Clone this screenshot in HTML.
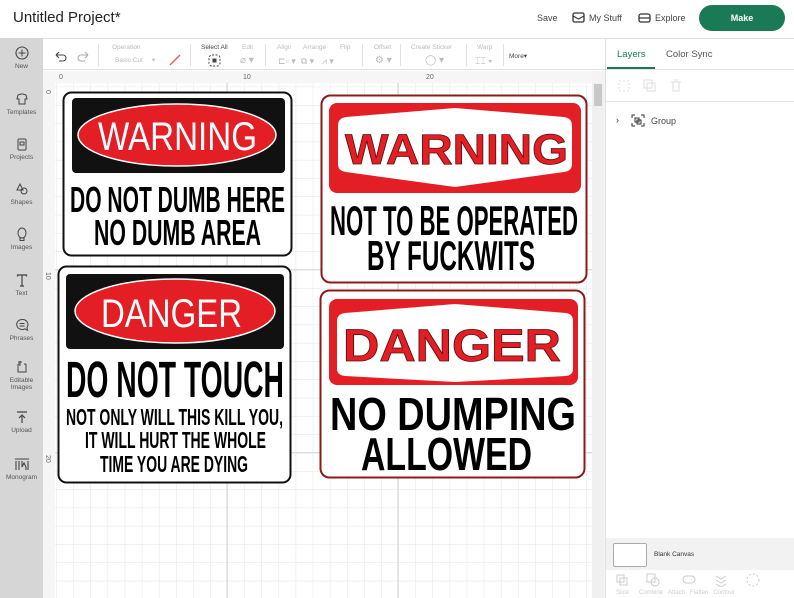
<!DOCTYPE html>
<html><head><meta charset="utf-8"><style>
*{margin:0;padding:0;box-sizing:border-box}
body{width:794px;height:598px;overflow:hidden;background:#fff;font-family:"Liberation Sans",sans-serif;position:relative;color:#333}
.abs{position:absolute}
.side{left:0;top:38px;width:43px;height:560px;background:#d6d6d6}
.si{position:absolute;left:0;width:43px;text-align:center;font-size:6.5px;color:#555}
.si svg{display:block;margin:0 auto 3px}
.tb{font-size:6.5px;color:#bbb;position:absolute}
</style></head><body>
<div class="abs" style="left:13px;top:9px;font-size:15px;color:#222">Untitled Project*</div>
<div class="abs" style="left:537px;top:13px;font-size:9px;color:#444">Save</div>
<svg class="abs" style="left:572px;top:12px" width="13" height="11"><rect x="1" y="1" width="11" height="9" rx="1.5" fill="none" stroke="#333" stroke-width="1.3"/><path d="M1 4l5.5 3 5.5-3" fill="none" stroke="#333" stroke-width="1.2"/></svg>
<div class="abs" style="left:589px;top:13px;font-size:9px;color:#444">My Stuff</div>
<svg class="abs" style="left:638px;top:13px" width="13" height="10"><rect x="1" y="1" width="11" height="8" rx="2" fill="none" stroke="#333" stroke-width="1.3"/><path d="M1 5h11" stroke="#333" stroke-width="1.2"/></svg>
<div class="abs" style="left:655px;top:13px;font-size:9px;color:#444">Explore</div>
<div class="abs" style="left:699px;top:5px;width:86px;height:26px;border-radius:13px;background:#1b7a56;color:#fff;font-size:9px;font-weight:bold;text-align:center;line-height:26px">Make</div>
<div class="abs" style="left:0;top:38px;width:794px;height:1px;background:#e2e2e2"></div>

<div class="abs side">
<div class="si" style="top:8px"><svg width="14" height="14"><circle cx="7" cy="7" r="6" fill="none" stroke="#444" stroke-width="1.1"/><path d="M7 3.5v7M3.5 7h7" stroke="#444"/></svg>New</div>
<div class="si" style="top:54px"><svg width="14" height="14"><path d="M3 3l3-1h2l3 1 1 4h-2v5H4V7H2z" fill="none" stroke="#444"/></svg>Templates</div>
<div class="si" style="top:99px"><svg width="14" height="14"><rect x="3" y="2" width="8" height="11" rx="1" fill="none" stroke="#444"/><rect x="5" y="5" width="4" height="3" fill="none" stroke="#444"/></svg>Projects</div>
<div class="si" style="top:144px"><svg width="14" height="14"><path d="M2 8l3-6 3 6z" fill="none" stroke="#444"/><circle cx="9" cy="9" r="3" fill="none" stroke="#444"/></svg>Shapes</div>
<div class="si" style="top:189px"><svg width="14" height="14"><ellipse cx="7" cy="6" rx="4" ry="5" fill="none" stroke="#444"/><rect x="5" y="11" width="4" height="2.5" fill="none" stroke="#444"/></svg>Images</div>
<div class="si" style="top:235px"><svg width="14" height="14"><path d="M2.5 3.5V2h9v1.5M7 2v11M5 13h4" fill="none" stroke="#444" stroke-width="1.2"/></svg>Text</div>
<div class="si" style="top:280px"><svg width="14" height="14"><path d="M7 1.5a5.5 5 0 1 0 3 9.3l2.5 1.5-.5-3A5.5 5 0 0 0 7 1.5z" fill="none" stroke="#444"/><path d="M4.5 5.5h5M4.5 8h5" stroke="#444"/></svg>Phrases</div>
<div class="si" style="top:322px"><svg width="14" height="14"><path d="M3 4v8h8V4M3 4h2M9 4h2M5 1v5M3 2h4" fill="none" stroke="#444"/></svg>Editable<br>Images</div>
<div class="si" style="top:372px"><svg width="14" height="14"><path d="M2 2h10M7 13V5M4 8l3-3 3 3" fill="none" stroke="#444" stroke-width="1.2"/></svg>Upload</div>
<div class="si" style="top:419px"><svg width="16" height="14"><path d="M1 2h14M2 4v9M5 4v9M8 4v6l2-4 2 4v3M14 4v9" fill="none" stroke="#444" stroke-width="1.1"/></svg>Monogram</div>
</div>

<div class="abs" style="left:43px;top:39px;width:562px;height:31px;background:#fff;border-bottom:1px solid #e0e0e0"></div>
<svg class="abs" style="left:52px;top:48px" width="40" height="14"><path d="M4 7h7a3 3 0 0 1 0 6H7M4 7l3-3M4 7l3 3" fill="none" stroke="#444" stroke-width="1.1"/><path d="M36 7h-7a3 3 0 0 0 0 6h4M36 7l-3-3M36 7l-3 3" fill="none" stroke="#aaa" stroke-width="1"/></svg>
<div class="tb" style="left:112px;top:44px">Operation</div>
<div class="tb" style="left:115px;top:56px">Basic Cut &nbsp;&nbsp;&nbsp;&nbsp;▾</div>
<svg class="abs" style="left:168px;top:54px" width="14" height="12"><path d="M2 11L12 1" stroke="#e55" stroke-width="1.3"/></svg>
<div class="tb" style="left:201px;top:44px;color:#444">Select All</div>
<svg class="abs" style="left:208px;top:54px" width="13" height="13"><rect x="1" y="1" width="11" height="11" rx="3" fill="none" stroke="#444" stroke-dasharray="2 1.5"/><rect x="4.5" y="4.5" width="4" height="4" fill="#444"/></svg>
<div class="tb" style="left:242px;top:44px">Edit</div>
<div class="tb" style="left:240px;top:55px;font-size:10px">⌀ ▾</div>
<div class="tb" style="left:277px;top:44px">Align</div>
<div class="tb" style="left:303px;top:44px">Arrange</div>
<div class="tb" style="left:340px;top:44px">Flip</div>
<div class="tb" style="left:278px;top:56px;font-size:9px">⊏▫ ▾ &nbsp;⧉ ▾ &nbsp;&nbsp;⩘ ▾</div>
<div class="tb" style="left:374px;top:44px">Offset</div>
<div class="tb" style="left:375px;top:55px;font-size:10px">⚙ ▾</div>
<div class="tb" style="left:411px;top:44px">Create Sticker</div>
<div class="tb" style="left:425px;top:55px;font-size:10px">◯ ▾</div>
<div class="tb" style="left:477px;top:44px">Warp</div>
<div class="tb" style="left:475px;top:56px;font-size:9px">⌶⌶ ▾</div>
<div class="tb" style="left:509px;top:52px;color:#444">More▾</div>
<div class="abs" style="left:98px;top:44px;width:1px;height:22px;background:#e0e0e0"></div>
<div class="abs" style="left:190px;top:44px;width:1px;height:22px;background:#e0e0e0"></div>
<div class="abs" style="left:265px;top:44px;width:1px;height:22px;background:#e0e0e0"></div>
<div class="abs" style="left:362px;top:44px;width:1px;height:22px;background:#e0e0e0"></div>
<div class="abs" style="left:400px;top:44px;width:1px;height:22px;background:#e0e0e0"></div>
<div class="abs" style="left:466px;top:44px;width:1px;height:22px;background:#e0e0e0"></div>
<div class="abs" style="left:503px;top:44px;width:1px;height:22px;background:#e0e0e0"></div>

<svg class="abs" style="left:0;top:0" width="605" height="598" viewBox="0 0 605 598">
<defs>
<pattern id="g" x="56.3" y="86.7" width="17.1" height="18.3" patternUnits="userSpaceOnUse"><path d="M0 0V18.3M0 0H17.1" stroke="#e3e3e3" stroke-width="1" fill="none"/></pattern>
</defs>
<rect x="43" y="71" width="562" height="527" fill="#f4f4f4"/>
<rect x="55" y="83" width="537" height="515" fill="#fff"/>
<rect x="55" y="83" width="537" height="515" fill="url(#g)"/>
<path d="M227 83V598M398 83V598M55 269.7H592M55 452.7H592" stroke="#d2d2d2"/>
<rect x="43" y="71" width="549" height="12" fill="#f6f6f6"/>
<rect x="43" y="71" width="12" height="527" fill="#f6f6f6"/>
<g font-size="7" fill="#666"><text x="59" y="79">0</text><text x="243" y="79">10</text><text x="426" y="79">20</text>
<text transform="translate(46,90) rotate(90)">0</text><text transform="translate(46,272) rotate(90)">10</text><text transform="translate(46,455) rotate(90)">20</text></g>
<rect x="592" y="83" width="12" height="515" fill="#f0f0f0"/>
<rect x="594" y="84" width="8" height="22" fill="#c8c8c8"/>

<g font-family="'Liberation Sans Narrow','Liberation Sans',sans-serif" font-weight="bold">
<rect x="63.5" y="92.5" width="228" height="163" rx="8" fill="#fff" stroke="#111" stroke-width="2"/>
<rect x="72" y="98" width="213" height="75" rx="4" fill="#111"/>
<ellipse cx="177" cy="135" rx="99" ry="31" fill="#e31e24" stroke="#fff" stroke-width="1.5"/>
<text x="98" y="150" font-family="'Liberation Sans',sans-serif" font-weight="normal" font-size="40" fill="#fff" textLength="159" lengthAdjust="spacingAndGlyphs">WARNING</text>
<text x="70" y="212" font-size="36" textLength="215" lengthAdjust="spacingAndGlyphs">DO NOT DUMB HERE</text>
<text x="94" y="245" font-size="36" textLength="167" lengthAdjust="spacingAndGlyphs">NO DUMB AREA</text>
<rect x="58.5" y="266.5" width="232" height="216" rx="8" fill="#fff" stroke="#111" stroke-width="2"/>
<rect x="66" y="274" width="218" height="75" rx="4" fill="#111"/>
<ellipse cx="175" cy="311" rx="100" ry="32" fill="#e31e24" stroke="#fff" stroke-width="1.5"/>
<text x="101" y="327" font-family="'Liberation Sans',sans-serif" font-weight="normal" font-size="40" fill="#fff" textLength="141" lengthAdjust="spacingAndGlyphs">DANGER</text>
<text x="66" y="397" font-size="51" textLength="218" lengthAdjust="spacingAndGlyphs">DO NOT TOUCH</text>
<text x="66" y="425" font-size="23" textLength="217" lengthAdjust="spacingAndGlyphs">NOT ONLY WILL THIS KILL YOU,</text>
<text x="85" y="448" font-size="23" textLength="181" lengthAdjust="spacingAndGlyphs">IT WILL HURT THE WHOLE</text>
<text x="100" y="472" font-size="23" textLength="148" lengthAdjust="spacingAndGlyphs">TIME YOU ARE DYING</text>
<rect x="321.5" y="95.5" width="265" height="187" rx="9" fill="#fff" stroke="#8b1a1a" stroke-width="2"/>
<rect x="329" y="103" width="252" height="90" rx="8" fill="#e31e24"/>
<path d="M346 117L455 108L564 117Q572 118 572 126V164Q572 171 564 172L455 187L346 172Q338 171 338 164V126Q338 118 346 117Z" fill="#fff"/>
<text x="345" y="164" font-family="'Liberation Sans',sans-serif" font-size="43" fill="#e31e24" stroke="#5a0d0d" stroke-width="0.8" textLength="223" lengthAdjust="spacingAndGlyphs">WARNING</text>
<text x="330" y="235" font-size="42" textLength="248" lengthAdjust="spacingAndGlyphs">NOT TO BE OPERATED</text>
<text x="367" y="270" font-size="42" textLength="168" lengthAdjust="spacingAndGlyphs">BY FUCKWITS</text>
<rect x="320.5" y="290.5" width="264" height="187" rx="9" fill="#fff" stroke="#8b1a1a" stroke-width="2"/>
<rect x="329" y="299" width="249" height="86" rx="8" fill="#e31e24"/>
<path d="M345 313L455 304L566 313Q573 314 573 321V369Q573 375 566 376L455 382L345 376Q337 375 337 369V321Q337 314 345 313Z" fill="#fff"/>
<text x="343" y="361" font-family="'Liberation Sans',sans-serif" font-size="45" fill="#e31e24" stroke="#5a0d0d" stroke-width="0.8" textLength="218" lengthAdjust="spacingAndGlyphs">DANGER</text>
<text x="330" y="430" font-family="'Liberation Sans',sans-serif" font-size="46" textLength="246" lengthAdjust="spacingAndGlyphs">NO DUMPING</text>
<text x="361" y="470" font-family="'Liberation Sans',sans-serif" font-size="46" textLength="171" lengthAdjust="spacingAndGlyphs">ALLOWED</text>
</g>
</svg>

<div class="abs" style="left:605px;top:39px;width:189px;height:559px;background:#fff;border-left:1px solid #e0e0e0"></div>
<div class="abs" style="left:617px;top:49px;font-size:9.5px;color:#1b7a56">Layers</div>
<div class="abs" style="left:666px;top:49px;font-size:9.5px;color:#555">Color Sync</div>
<div class="abs" style="left:607px;top:67px;width:48px;height:2px;background:#1b7a56"></div>
<div class="abs" style="left:606px;top:69px;width:188px;height:1px;background:#e4e4e4"></div>
<svg class="abs" style="left:617px;top:78px" width="70" height="16"><rect x="2" y="3" width="10" height="10" fill="none" stroke="#ddd" stroke-dasharray="2 2"/><rect x="27" y="2" width="8" height="8" fill="none" stroke="#ddd"/><rect x="30" y="5" width="8" height="8" fill="none" stroke="#ddd"/><path d="M54 4h10M56 4v9h6V4M57 2h4" fill="none" stroke="#ddd"/></svg>
<div class="abs" style="left:606px;top:101px;width:188px;height:1px;background:#e4e4e4"></div>
<div class="abs" style="left:616px;top:115px;font-size:9px;color:#333">›</div>
<svg class="abs" style="left:631px;top:114px" width="14" height="13"><path d="M1 4V1h3M10 1h3v3M13 9v3h-3M4 12H1V9" fill="none" stroke="#333"/><rect x="4" y="4" width="4" height="4" fill="none" stroke="#333"/><rect x="6" y="6" width="4" height="4" fill="none" stroke="#333"/></svg>
<div class="abs" style="left:651px;top:116px;font-size:9px;color:#444">Group</div>
<div class="abs" style="left:606px;top:538px;width:188px;height:32px;background:#f2f2f2"></div>
<div class="abs" style="left:613px;top:543px;width:34px;height:24px;border:1px solid #aaa;background:#fff;border-radius:2px"></div>
<div class="abs" style="left:654px;top:551px;font-size:6.5px;color:#333">Blank Canvas</div>
<svg class="abs" style="left:615px;top:573px" width="150" height="14"><g fill="none" stroke="#ccc"><rect x="2" y="2" width="7" height="7"/><rect x="5" y="5" width="7" height="7"/><rect x="32" y="1" width="8" height="8"/><circle cx="40" cy="9" r="4"/><rect x="68" y="3" width="12" height="7" rx="3.5"/><path d="M101 3l5 3 5-3M101 7l5 3 5-3M101 11l5 3 5-3"/><circle cx="138" cy="7" r="6" stroke-dasharray="2 2"/></g></svg>
<div class="abs" style="left:616px;top:590px;font-size:6px;color:#ccc">Slice &nbsp;&nbsp;&nbsp;&nbsp;&nbsp;Combine &nbsp;&nbsp;Attach &nbsp;&nbsp;Flatten &nbsp;&nbsp;Contour</div>
</body></html>
